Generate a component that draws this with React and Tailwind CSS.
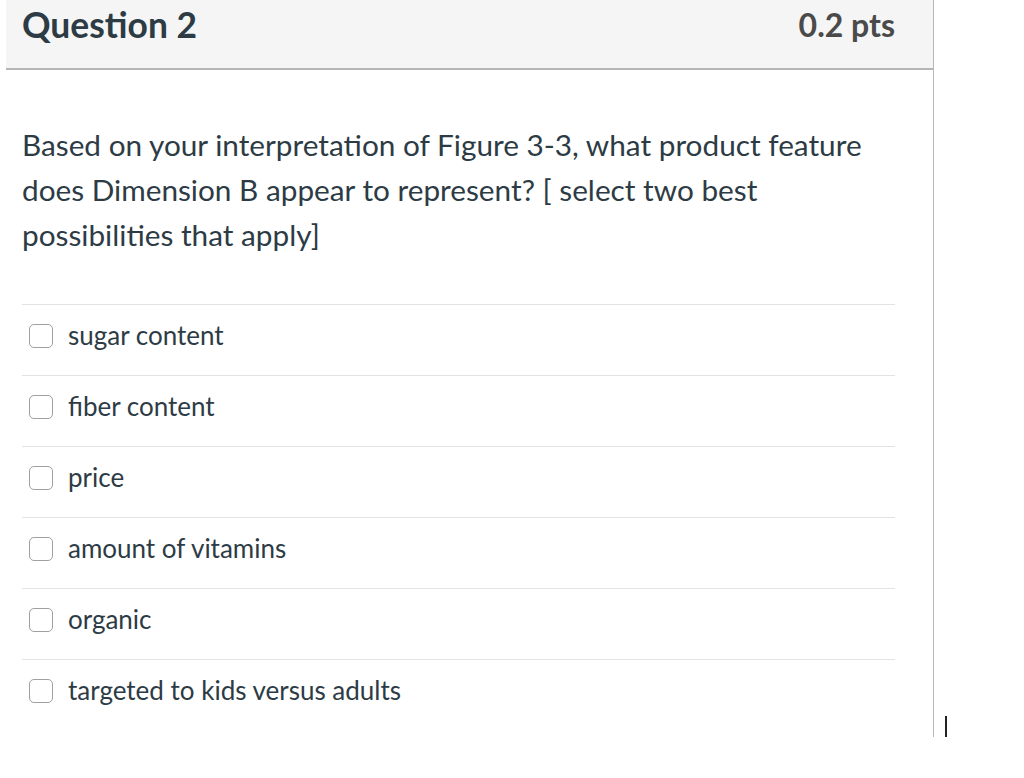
export default function App() {
  const answers = [
    "sugar content",
    "fiber content",
    "price",
    "amount of vitamins",
    "organic",
    "targeted to kids versus adults",
  ];
  return (
    <div className="relative w-[1024px] h-[778px] bg-white" style={{ fontFamily: "Lato, 'Noto Sans', sans-serif" }}>
      <div className="ml-[6px] w-[928px] h-[737px] border-r border-[#b8b8b8]">
        <div className="h-[70px] bg-[#f5f5f5] border-b-2 border-[#b5b5b5] flex items-start justify-between pl-[16px] pr-[38px] pt-[7px]">
          <div className="text-[35.4px] font-bold text-[#2d3b45] leading-none">Question 2</div>
          <div className="text-[32px] font-bold text-[#4a4a4a] leading-none pt-[2px]">0.2 pts</div>
        </div>
        <div className="pl-[16px] pr-[38px]">
          <p className="mt-[52px] text-[29.75px] leading-[45px] text-[#2d3b45]">
            Based on your interpretation of Figure 3-3, what product feature does Dimension B appear to represent? [ select two best possibilities that apply]
          </p>
          <div className="mt-[47px]">
            {answers.map((a, i) => (
              <div key={i} className="h-[71px] border-t border-[#e3e3e3] flex items-center pb-[9px]">
                <span className="ml-[7px] w-[24px] h-[24px] rounded-[5px] border border-[#a0a0a0] bg-white shrink-0" />
                <span className="ml-[15px] text-[26px] text-[#2d3b45]">{a}</span>
              </div>
            ))}
          </div>
        </div>
      </div>
      <div className="absolute left-[945px] top-[716px] w-[2px] h-[21px] bg-[#222]" />
    </div>
  );
}
